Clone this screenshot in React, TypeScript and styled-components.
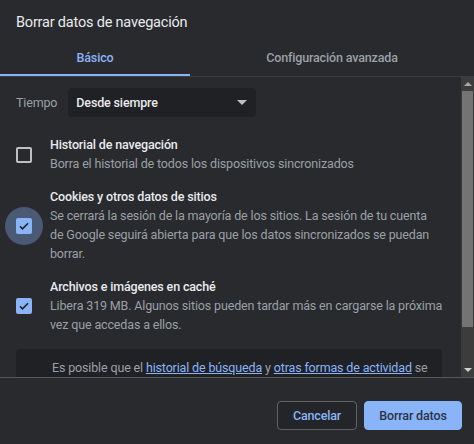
import React from "react";
import styled, { createGlobalStyle } from "styled-components";

const GlobalStyle = createGlobalStyle`
  html, body {
    margin: 0;
    padding: 0;
    background: #292a2d;
  }
  body {
    font-family: Roboto, "Liberation Sans", sans-serif;
    color: #e8eaed;
    letter-spacing: -0.15px;
  }
`;

const Dialog = styled.div`
  width: 474px;
  height: 444px;
  background: #292a2d;
  display: flex;
  flex-direction: column;
  overflow: hidden;
`;

const Title = styled.h2`
  margin: 0;
  padding: 13px 16px 0;
  height: 25px;
  font-size: 14.5px;
  letter-spacing: -0.2px;
  line-height: 20px;
  font-weight: 400;
  color: #e8eaed;
`;

const Tabs = styled.div`
  display: flex;
  height: 38px;
  border-bottom: 1px solid #3c3d40;
`;

const Tab = styled.div<{ $active?: boolean }>`
  flex: ${({ $active }) => ($active ? "0 0 190px" : "1")};
  display: flex;
  align-items: center;
  justify-content: center;
  font-size: 12.5px;
  font-weight: 500;
  color: ${({ $active }) => ($active ? "#8ab4f8" : "#9aa0a6")};
  box-shadow: ${({ $active }) => ($active ? "inset 0 -2px 0 #8ab4f8" : "none")};
  padding-top: 1px;
`;

const Body = styled.div`
  display: flex;
  height: 300px;
  border-bottom: 1px solid #55575b;
`;

const Content = styled.div`
  flex: 1;
  overflow: hidden;
  padding: 11px 19px 0 16px;
  display: flex;
  flex-direction: column;
`;

const TimeRow = styled.div`
  display: flex;
  align-items: center;
  gap: 11px;
  margin-bottom: 19px;
`;

const TimeLabel = styled.span`
  font-size: 12.5px;
  color: #9aa0a6;
`;

const Select = styled.div`
  width: 188px;
  height: 29px;
  box-sizing: border-box;
  background: #202124;
  border-radius: 4px;
  display: flex;
  align-items: center;
  justify-content: space-between;
  padding: 0 9px 0 8px;
  font-size: 12.5px;
  font-weight: 500;
  color: #e8eaed;
`;

const Caret = styled.span`
  width: 0;
  height: 0;
  border-left: 5px solid transparent;
  border-right: 5px solid transparent;
  border-top: 5px solid #bdc1c6;
`;

const Option = styled.div`
  display: flex;
  align-items: center;
  gap: 18px;
  margin-bottom: 15px;
`;

const CheckCell = styled.div<{ $focused?: boolean }>`
  position: relative;
  width: 16px;
  height: 16px;
  flex: 0 0 16px;
  &::before {
    content: "";
    display: ${({ $focused }) => ($focused ? "block" : "none")};
    position: absolute;
    left: -11px;
    top: -11px;
    width: 38px;
    height: 38px;
    border-radius: 50%;
    background: rgba(138, 180, 248, 0.35);
  }
`;

const Box = styled.div<{ $checked?: boolean }>`
  position: relative;
  width: 16px;
  height: 16px;
  box-sizing: border-box;
  border-radius: 2px;
  border: 2px solid ${({ $checked }) => ($checked ? "#8ab4f8" : "#bdc1c6")};
  background: ${({ $checked }) => ($checked ? "#8ab4f8" : "transparent")};
  display: flex;
  align-items: center;
  justify-content: center;
`;

const OptionText = styled.div`
  flex: 0 0 400px;
`;

const OptionTitle = styled.div`
  font-size: 12.5px;
  line-height: 18px;
  font-weight: 500;
  color: #e8eaed;
`;

const OptionDesc = styled.div`
  font-size: 12.5px;
  line-height: 19px;
  color: #9aa0a6;
`;

const Notice = styled.div`
  background: #202124;
  border-radius: 4px;
  padding: 9px 8px 10px 36px;
  font-size: 12.5px;
  line-height: 19px;
  color: #9aa0a6;
`;

const Link = styled.a`
  color: #8ab4f8;
  text-decoration: underline;
`;

const ScrollBar = styled.div`
  flex: 0 0 13px;
  display: flex;
  flex-direction: column;
  background: #3c3c3c;
`;

const ScrollButton = styled.div<{ $down?: boolean }>`
  height: 14px;
  display: flex;
  align-items: center;
  justify-content: center;
  &::after {
    content: "";
    width: 0;
    height: 0;
    border-left: 4px solid transparent;
    border-right: 4px solid transparent;
    ${({ $down }) =>
      $down ? "border-top: 4px solid #cfcfcf;" : "border-bottom: 4px solid #a8a8a8;"}
  }
`;

const Thumb = styled.div`
  height: 236px;
  margin: 0 1px;
  background: #747474;
`;

const Track = styled.div`
  flex: 1;
`;

const Footer = styled.div`
  flex: 1;
  display: flex;
  justify-content: flex-end;
  align-items: flex-start;
  gap: 7px;
  padding: 23px 12px 0 0;
`;

const Button = styled.button<{ $primary?: boolean }>`
  height: 29px;
  box-sizing: border-box;
  padding: 0 14px;
  border-radius: 4px;
  font-family: Roboto, "Liberation Sans", sans-serif;
  font-size: 12.5px;
  letter-spacing: -0.15px;
  font-weight: 500;
  border: 1px solid ${({ $primary }) => ($primary ? "#8ab4f8" : "#5f6368")};
  background: ${({ $primary }) => ($primary ? "#8ab4f8" : "#242528")};
  color: ${({ $primary }) => ($primary ? "#2a3346" : "#8ab4f8")};
  width: ${({ $primary }) => ($primary ? "98px" : "80px")};
`;

const CheckMark = () => (
  <svg width="12" height="12" viewBox="0 0 24 24">
    <path d="M4 12.5l5 5L20 6.5" fill="none" stroke="#202124" strokeWidth="3.2" />
  </svg>
);

interface IOptionProps {
  title: string;
  desc: string;
  checked?: boolean;
  focused?: boolean;
}

const ClearOption = ({ title, desc, checked, focused }: IOptionProps) => (
  <Option>
    <CheckCell $focused={focused}>
      <Box $checked={checked}>{checked && <CheckMark />}</Box>
    </CheckCell>
    <OptionText>
      <OptionTitle>{title}</OptionTitle>
      <OptionDesc>{desc}</OptionDesc>
    </OptionText>
  </Option>
);

const App = () => {
  return (
    <Dialog>
      <GlobalStyle />
      <Title>Borrar datos de navegación</Title>
      <Tabs>
        <Tab $active>Básico</Tab>
        <Tab>Configuración avanzada</Tab>
      </Tabs>
      <Body>
        <Content>
          <TimeRow>
            <TimeLabel>Tiempo</TimeLabel>
            <Select>
              Desde siempre
              <Caret />
            </Select>
          </TimeRow>
          <ClearOption
            title="Historial de navegación"
            desc="Borra el historial de todos los dispositivos sincronizados"
          />
          <ClearOption
            title="Cookies y otros datos de sitios"
            desc={"Se cerrará la sesión de la mayoría de los sitios. La sesión de tu cuenta de\u00a0Google seguirá abierta para que los datos sincronizados se puedan borrar."}
            checked
            focused
          />
          <ClearOption
            title="Archivos e imágenes en caché"
            desc="Libera 319 MB. Algunos sitios pueden tardar más en cargarse la próxima vez que accedas a ellos."
            checked
          />
          <Notice>
            Es posible que el <Link>historial de búsqueda</Link> y{" "}
            <Link>otras formas de actividad</Link> se guarden en tu cuenta de
            Google cuando inicies sesión. Puedes eliminarlos en cualquier momento.
          </Notice>
        </Content>
        <ScrollBar>
          <ScrollButton />
          <Thumb />
          <Track />
          <ScrollButton $down />
        </ScrollBar>
      </Body>
      <Footer>
        <Button>Cancelar</Button>
        <Button $primary>Borrar datos</Button>
      </Footer>
    </Dialog>
  );
};

export default App;
